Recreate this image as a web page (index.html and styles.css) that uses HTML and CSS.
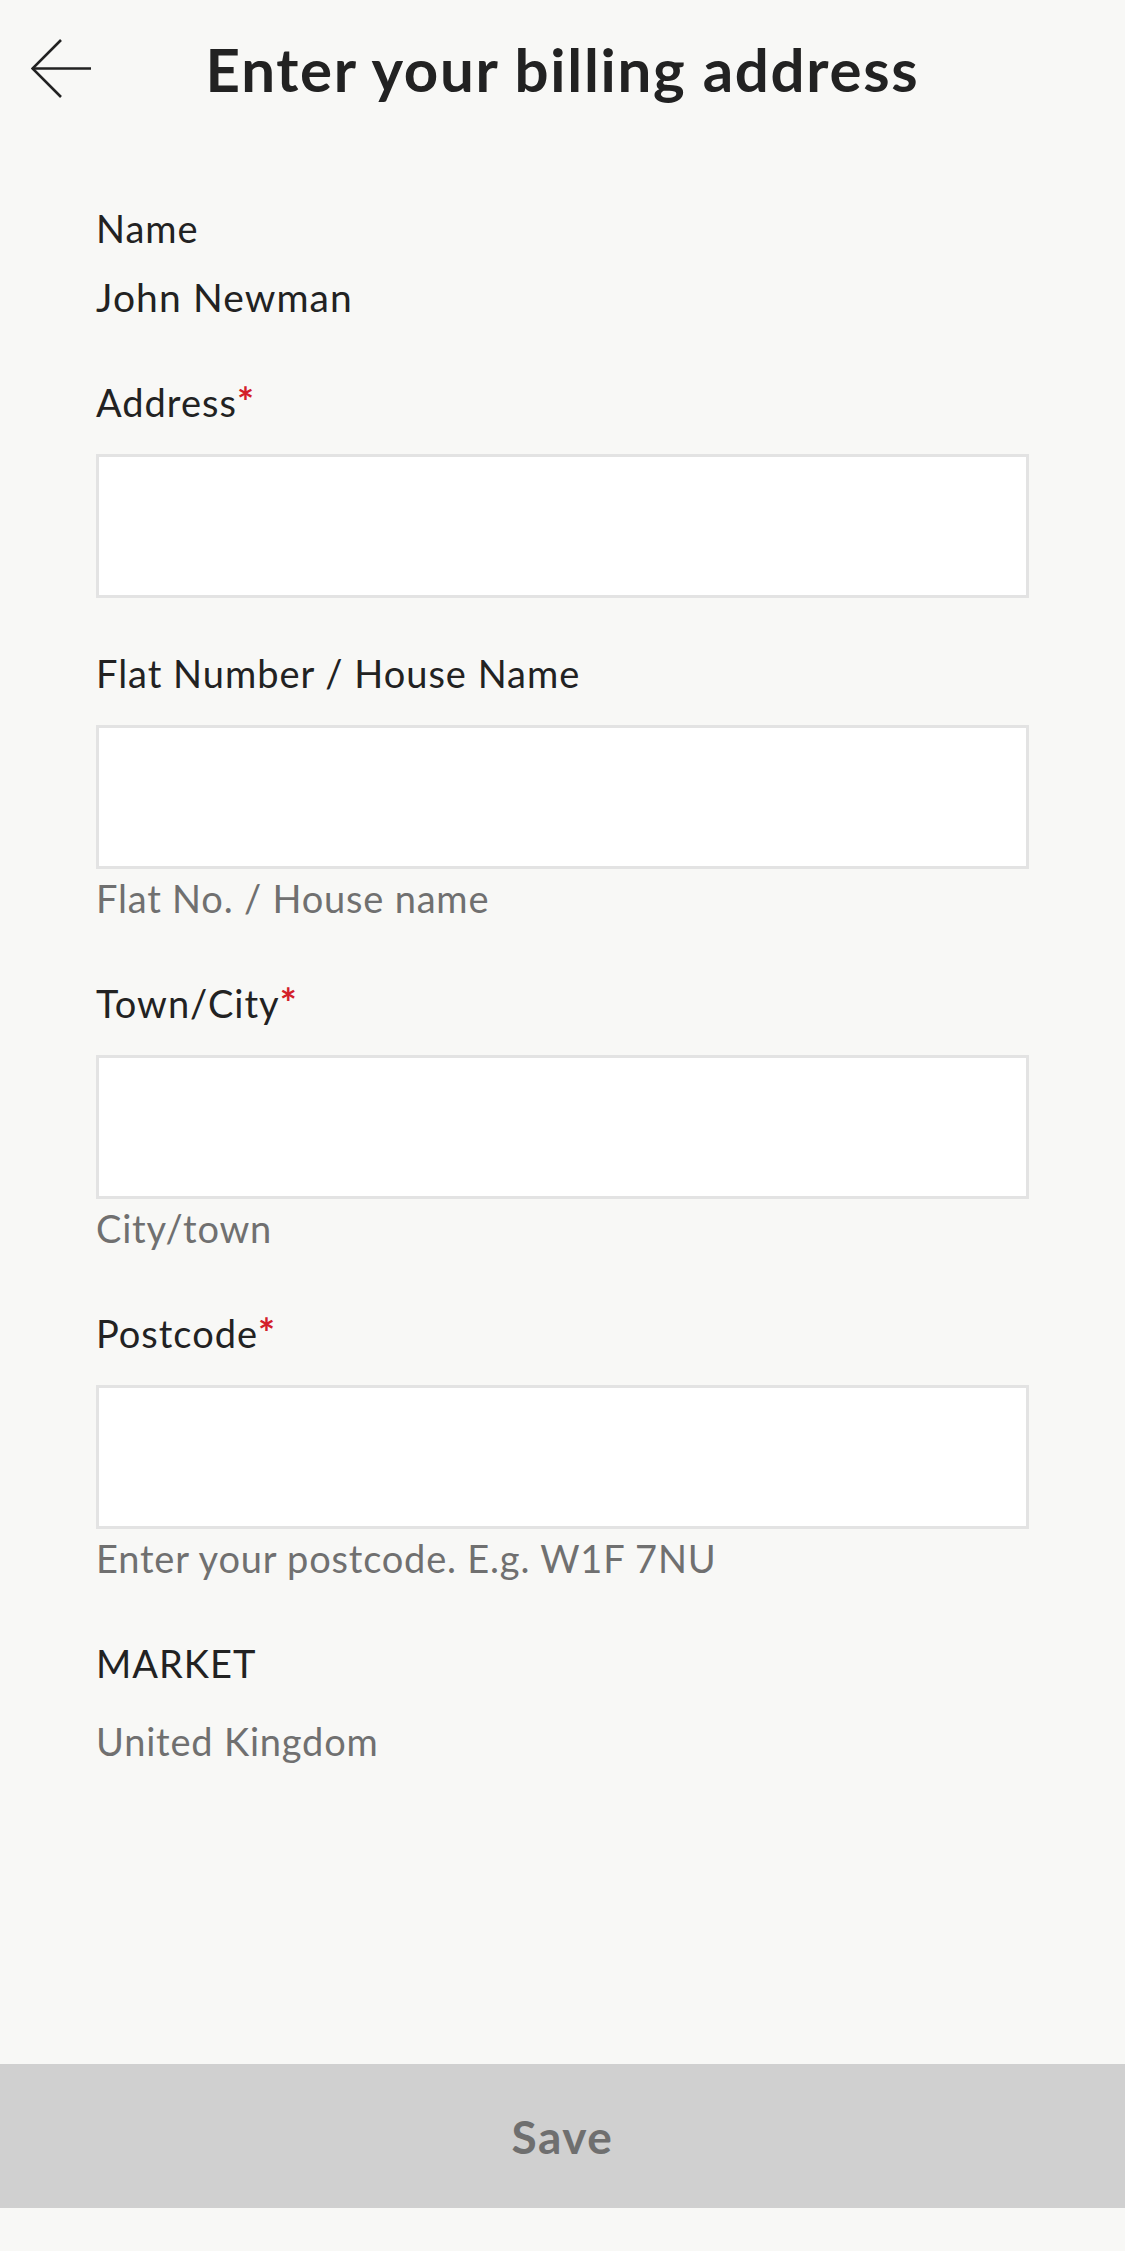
FILE: index.html
```html
<!DOCTYPE html>
<html lang="en">
<head>
<meta charset="utf-8">
<title>Enter your billing address</title>
<link rel="stylesheet" href="styles.css">
</head>
<body>
<div class="page">
  <header class="header">
    <button class="back" aria-label="Back">
      <svg width="60" height="60" viewBox="0 0 60 60" fill="none" stroke="#222" stroke-width="2.6">
        <path d="M30 1 L1.5 29.5 L30 58" />
        <path d="M1.5 29.5 H60" />
      </svg>
    </button>
    <h1 class="title">Enter your billing address</h1>
    <div class="spacer"></div>
  </header>

  <main class="form">
    <section class="static">
      <div class="label">Name</div>
      <div class="value">John Newman</div>
    </section>

    <section class="field">
      <label class="label">Address<span class="req">*</span></label>
      <div class="input"></div>
    </section>

    <section class="field">
      <label class="label">Flat Number / House Name</label>
      <div class="input"></div>
      <div class="helper">Flat No. / House name</div>
    </section>

    <section class="field">
      <label class="label">Town/City<span class="req">*</span></label>
      <div class="input"></div>
      <div class="helper">City/town</div>
    </section>

    <section class="field">
      <label class="label">Postcode<span class="req">*</span></label>
      <div class="input"></div>
      <div class="helper">Enter your postcode. E.g. W1F 7NU</div>
    </section>

    <section class="market">
      <div class="label">MARKET</div>
      <div class="market-value">United Kingdom</div>
    </section>
  </main>

  <footer class="footer">
    <button class="save">Save</button>
  </footer>
</div>
</body>
</html>
```

FILE: styles.css
```css
* { box-sizing: border-box; }

html, body {
  margin: 0;
  padding: 0;
  background: #f8f8f6;
}

body {
  font-family: "Lato", "Liberation Sans", sans-serif;
  color: #222222;
}

.page {
  min-height: 2251px;
  display: flex;
  flex-direction: column;
}

.header {
  display: grid;
  grid-template-columns: 1fr auto 1fr;
  align-items: center;
  padding: 33px 0 0 0;
}

.back {
  justify-self: start;
  margin-left: 31px;
  padding: 0;
  border: 0;
  background: none;
  width: 60px;
  height: 60px;
  display: flex;
}

.title {
  margin: 0;
  font-size: 60px;
  line-height: 72px;
  font-weight: 700;
  color: #222222;
  letter-spacing: 1.7px;
  white-space: nowrap;
}

.form {
  padding: 99px 96px 0 96px;
}

.label {
  display: block;
  font-size: 38px;
  line-height: 48px;
  letter-spacing: 1px;
  color: #222222;
}

.req {
  color: #d3202a;
  font-weight: 700;
  font-size: 40px;
  line-height: 0;
  letter-spacing: 0;
}

.value {
  font-size: 39px;
  line-height: 48px;
  letter-spacing: 1.1px;
  margin-top: 21px;
}

.field {
  margin-top: 57px;
}

.field .label {
  margin-bottom: 28px;
}

.field + .field {
  margin-top: 51px;
}

.field:has(.helper) + .field,
.field:has(.helper) + .market {
  margin-top: 57px;
}

.input {
  height: 144px;
  background: #ffffff;
  border: 3px solid #e3e3e3;
}

.helper {
  margin-top: 5px;
  font-size: 38px;
  line-height: 48px;
  letter-spacing: 0.8px;
  color: #707070;
}

.market-value {
  margin-top: 30px;
  font-size: 38px;
  line-height: 48px;
  letter-spacing: 0.8px;
  color: #707070;
}

.footer {
  margin-top: auto;
  padding-bottom: 43px;
}

.save {
  display: block;
  width: 100%;
  height: 144px;
  border: 0;
  background: #d0d0d0;
  color: #6f6f6f;
  font-family: inherit;
  font-size: 46px;
  font-weight: 700;
  letter-spacing: 1.5px;
  padding: 0;
}
```
